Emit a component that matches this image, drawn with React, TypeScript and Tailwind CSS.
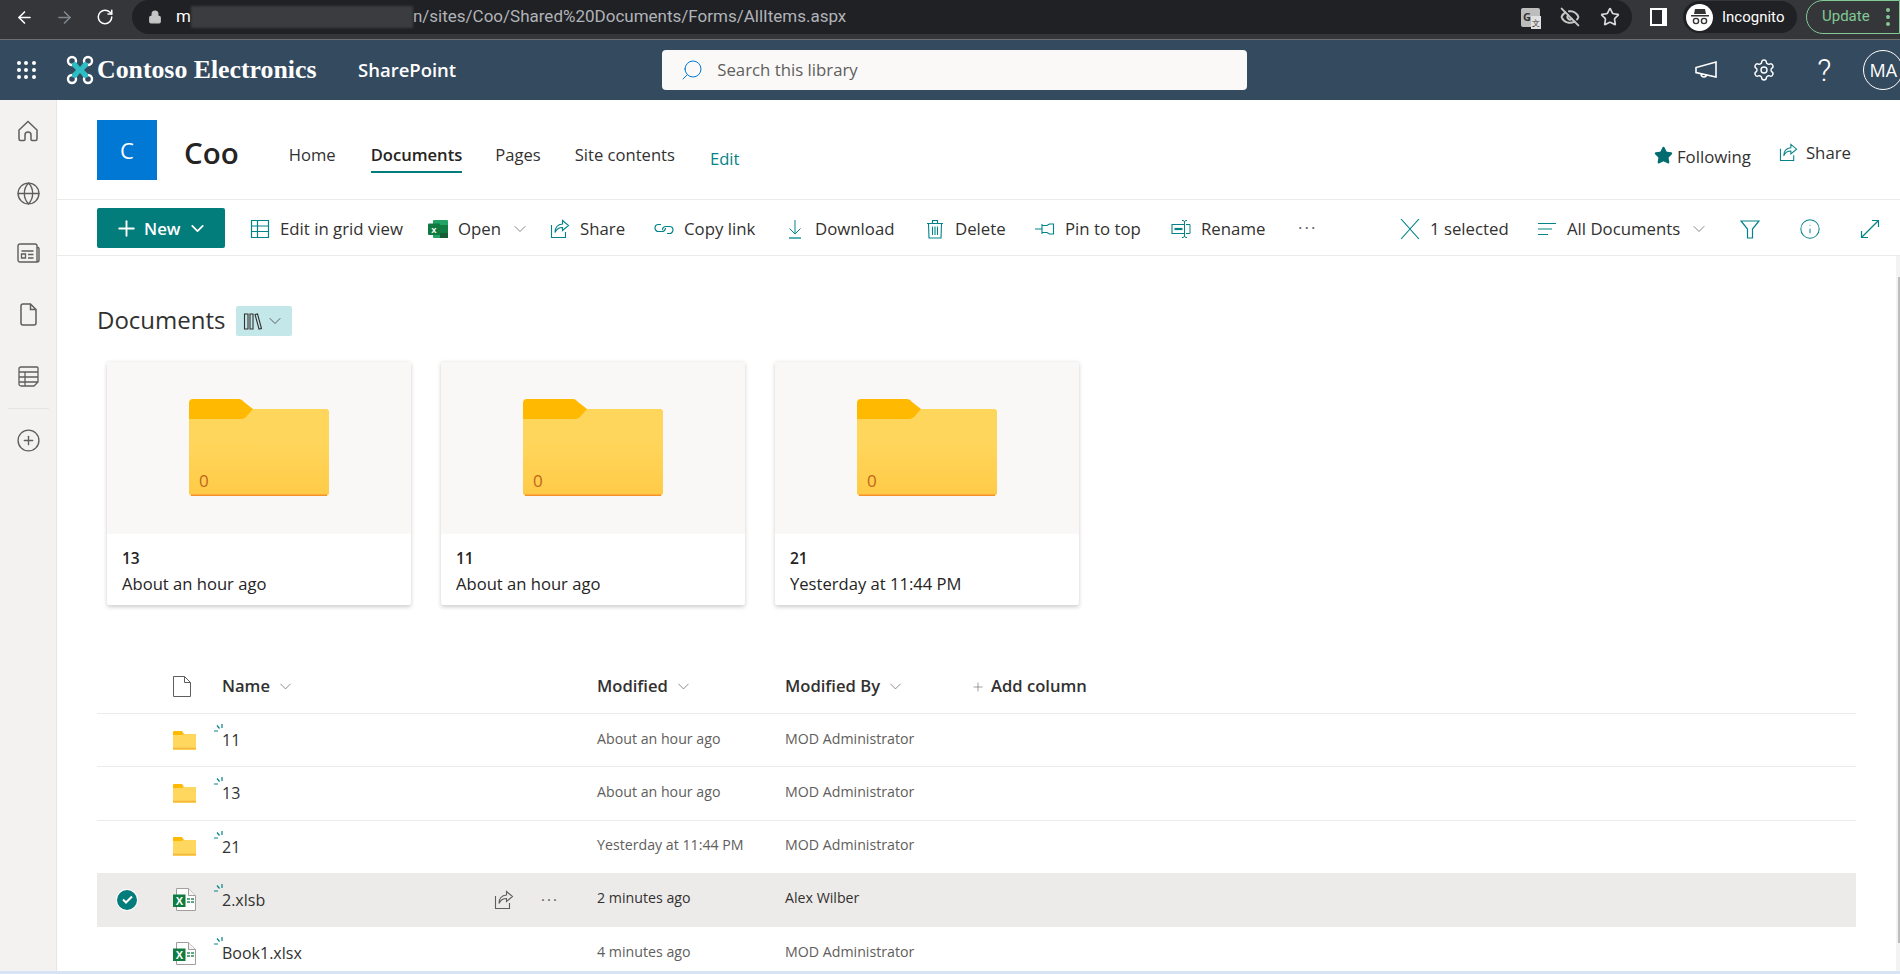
import { ReactNode } from "react";
import {
  ArrowLeft,
  ArrowRight,
  RotateCw,
  Lock,
  EyeOff,
  Star,
  Settings,
  Search,
  Globe,
  PlusCircle,
  Plus,
  ChevronDown,
  Info,
} from "lucide-react";

const font = "font-['Open_Sans','Noto_Sans',sans-serif]";
const teal = "#038387";

function Waffle() {
  return (
    <div className="grid grid-cols-3 gap-[3px] w-[19px]">
      {Array.from({ length: 9 }).map((_, i) => (
        <span key={i} className="w-[4px] h-[4px] rounded-full bg-white" />
      ))}
    </div>
  );
}

function ContosoLogo() {
  return (
    <svg width="28" height="30" viewBox="0 0 28 30" fill="none">
      <circle cx="6" cy="6" r="4" stroke="white" strokeWidth="2.4" />
      <circle cx="22" cy="6" r="4" stroke="white" strokeWidth="2.4" />
      <circle cx="6" cy="24" r="4" stroke="white" strokeWidth="2.4" />
      <circle cx="22" cy="24" r="4" stroke="white" strokeWidth="2.4" />
      <path d="M6 8l4-1 4 5 4-5 4 1 0 3-4 4 4 4 0 3-4 1-4-5-4 5-4-1 0-3 4-4-4-4z" fill="#2ebdc3" />
    </svg>
  );
}

function Icon({ children, w = 20, h = 20, color = teal }: { children: ReactNode; w?: number; h?: number; color?: string }) {
  return (
    <svg width={w} height={h} viewBox={`0 0 ${w} ${h}`} fill="none" stroke={color} strokeWidth="1">
      {children}
    </svg>
  );
}

const GridIcon = () => (
  <Icon>
    <path d="M1.500 1.500h17v17h-17zM1.500 7h17M1.500 12.500h17M7.500 1.500v17" strokeWidth="1.200" />
  </Icon>
);

function ShareIcon({ color = teal, size = 20 }: { color?: string; size?: number }) {
  return (
    <svg width={size} height={size} viewBox="0 0 20 20" fill="none" stroke={color} strokeWidth="1.100">
      <path d="M1.500 6v12.500h14V13" />
      <path d="M12.500 1.500l6 5-6 5V8.500c-4 0-6 1.500-7.500 5 0-5 2.500-8 7.500-8.500z" />
    </svg>
  );
}

const LinkIcon = () => (
  <Icon>
    <path d="M7 5.500H4.500a3.500 3.500 0 0 0 0 7H8a3.500 3.500 0 0 0 3.500-3.500" strokeWidth="1.200" />
    <path d="M13 14.500h2.500a3.500 3.500 0 0 0 0-7H12A3.500 3.500 0 0 0 8.500 11" strokeWidth="1.200" />
  </Icon>
);

const DownloadIcon = () => (
  <Icon>
    <path d="M10 1v14M4.500 9.500L10 15l5.500-5.500" />
    <path d="M4 19h12" strokeWidth="1.300" />
  </Icon>
);

const TrashIcon = () => (
  <Icon>
    <path d="M3.500 4.500l.5 14.500h12l.5-14.500M2 4.500h16M7.500 4.500V1.500h5v3M7.500 7.500V16M10 7.500V16M12.500 7.500V16" strokeWidth="1.100" />
  </Icon>
);

const PinIcon = () => (
  <Icon>
    <path d="M0 10h7M7 5v10M7 6.500h5l2.500-1.500h4v10h-4L12 13.500H7" strokeWidth="1.100" />
  </Icon>
);

const RenameIcon = () => (
  <Icon>
    <path d="M13 5.500H1v9h12" strokeWidth="1.100" />
    <path d="M3.500 10h8" strokeWidth="2.200" />
    <path d="M13.500 3v14M11 1.500h1.500l1 1.500 1-1.500H16M11 18.500h1.500l1-1.500 1 1.500H16M15 5.500h4v9h-4" strokeWidth="1" />
  </Icon>
);

const ListIcon = () => (
  <Icon>
    <path d="M1 4.500h18M1 10h14M1 15.500h10" strokeWidth="1.200" />
  </Icon>
);

const CrossIcon = () => (
  <Icon>
    <path d="M1 0l18 20M19 0L1 20" strokeWidth="1.100" />
  </Icon>
);

const FilterIcon = () => (
  <Icon>
    <path d="M1 2h18l-6.500 8v9h-5v-9z" strokeWidth="1.200" />
  </Icon>
);

const ExpandIcon = () => (
  <Icon>
    <path d="M1.500 18.500l17-17M12 1.500h6.500V8M1.500 12v6.500H8" strokeWidth="1.200" />
  </Icon>
);

function ExcelSmall() {
  return (
    <svg width="20" height="20" viewBox="0 0 20 20">
      <rect x="5" y="1" width="15" height="18" rx="1" fill="#21a366" />
      <rect x="12" y="6" width="8" height="8" fill="#107c41" />
      <rect x="12" y="14" width="8" height="5" fill="#185c37" />
      <rect x="0" y="4.500" width="12" height="11.500" rx="1" fill="#0f7a40" />
      <text x="3.200" y="13.500" fontSize="9.500" fontWeight="700" fill="white" fontFamily="Liberation Sans">x</text>
    </svg>
  );
}

function ExcelFile() {
  return (
    <svg width="23" height="23" viewBox="0 0 23 23" fill="none">
      <path d="M3.500.5h12l7 7v15h-19z" fill="#fff" stroke="#a19f9d" />
      <path d="M15.500.5v7h7" fill="#f3f2f1" stroke="#a19f9d" />
      <g fill="#5fa882">
        <rect x="14" y="10" width="3" height="2" />
        <rect x="18" y="10" width="3" height="2" />
        <rect x="14" y="13" width="3" height="2" />
        <rect x="18" y="13" width="3" height="2" />
      </g>
      <rect x="0" y="6.500" width="12.500" height="12.500" fill="#107c41" />
      <text x="2.800" y="16.500" fontSize="11" fontWeight="700" fill="white" fontFamily="Liberation Sans">X</text>
    </svg>
  );
}

function BigFolder() {
  return (
    <div className="relative w-[140px] h-[97px]">
      <svg width="140" height="97" viewBox="0 0 140 97">
        <defs>
          <linearGradient id="folderBody" x1="0" y1="0" x2="0" y2="1">
            <stop offset="0.35" stopColor="#ffd65c" />
            <stop offset="1" stopColor="#ffcb47" />
          </linearGradient>
        </defs>
        <path d="M4 0h46q3 0 5 3l9 7h72q4 0 4 4v78q0 4-4 4H4q-4 0-4-4V4q0-4 4-4z" fill="#ffb900" />
        <path d="M0 20h52q3 0 5-2l7-8h72q4 0 4 4v79q0 4-4 4H4q-4 0-4-4z" fill="url(#folderBody)" />
        <path d="M2 96.300h136" stroke="#f7902a" strokeWidth="1.400" />
      </svg>
      <span className="absolute left-[10px] bottom-[7px] text-[17px] leading-none text-[#c2651c]">0</span>
    </div>
  );
}

function SmallFolder() {
  return (
    <svg width="23" height="19" viewBox="0 0 23 19">
      <path d="M1 0h8l2 3h12v15a1 1 0 0 1-1 1H1a1 1 0 0 1-1-1V1a1 1 0 0 1 1-1z" fill="#ffb900" />
      <path d="M0 4h8l3-1h12v15a1 1 0 0 1-1 1H1a1 1 0 0 1-1-1z" fill="#ffd75e" />
      <path d="M0 17.500h23" stroke="#f5b53f" strokeWidth="1.500" />
    </svg>
  );
}

function Card({ name, when }: { name: string; when: string }) {
  return (
    <div className="w-[304px] h-[243px] bg-white rounded-[2px] shadow-[0_1.6px_4px_rgba(0,0,0,0.2)] overflow-hidden">
      <div className="h-[172px] bg-[#f9f8f7] flex items-center justify-center pb-[2px]">
        <BigFolder />
      </div>
      <div className="pl-[15px] pt-[13px] text-[#252423]">
        <div className="text-[15.500px] leading-[22px] font-semibold">{name}</div>
        <div className="text-[16.600px] leading-[26px] mt-[2px]">{when}</div>
      </div>
    </div>
  );
}

function Sparkle() {
  return (
    <svg width="9" height="9" viewBox="0 0 9 9" className="absolute left-[-8px] top-[-4px]" stroke="#038387" strokeWidth="1.200" fill="none">
      <path d="M8 0v4M3 1.500l2.500 3M0 7h4" />
    </svg>
  );
}

function CmdItem({ icon, label, chevron, className }: { icon: ReactNode; label: string; chevron?: boolean; className: string }) {
  return (
    <div className={`flex items-center whitespace-nowrap mt-[2px] ${className}`}>
      <span className="w-[20px] flex justify-center shrink-0">{icon}</span>
      <span className="ml-[10px] text-[16.800px] text-[#323130]">{label}</span>
      {chevron && <ChevronDown className="ml-[9px] text-[#605e5c]" size={20} strokeWidth={0.9} />}
    </div>
  );
}

type Row = { name: string; when: string; by: string; kind: "folder" | "excel"; selected?: boolean };

const rows: Row[] = [
  { name: "11", when: "About an hour ago", by: "MOD Administrator", kind: "folder" },
  { name: "13", when: "About an hour ago", by: "MOD Administrator", kind: "folder" },
  { name: "21", when: "Yesterday at 11:44 PM", by: "MOD Administrator", kind: "folder" },
  { name: "2.xlsb", when: "2 minutes ago", by: "Alex Wilber", kind: "excel", selected: true },
  { name: "Book1.xlsx", when: "4 minutes ago", by: "MOD Administrator", kind: "excel" },
];

function FileRow({ row }: { row: Row }) {
  const dateColor = row.selected ? "text-[#323130]" : "text-[#605e5c]";
  return (
    <div className={`flex items-center h-[53.300px] shrink-0 ${row.selected ? "bg-[#edebe9]" : "border-t border-[#edebe9]"}`}>
      <div className="w-[76px] pl-[20px] flex items-center">
        {row.selected && (
          <span className="w-[20px] h-[20px] rounded-full bg-[#037c7c] ring-1 ring-white flex items-center justify-center">
            <svg width="11" height="9" viewBox="0 0 11 9" fill="none" stroke="white" strokeWidth="2"><path d="M1 4.500l3 3 6-6" /></svg>
          </span>
        )}
      </div>
      <div className="w-[49px] flex">{row.kind === "folder" ? <SmallFolder /> : <ExcelFile />}</div>
      <div className="w-[375px] flex items-center">
        <span className={`relative text-[16px] text-[#323130] ${row.selected ? "font-medium" : ""}`}>
          <Sparkle />
          {row.name}
        </span>
        {row.selected && (
          <div className="ml-auto flex items-center gap-[27px] pr-[36px]">
            <ShareIcon color="#605e5c" />
            <span className="text-[#605e5c] tracking-[2px] leading-none text-[15px] w-[20px]">···</span>
          </div>
        )}
      </div>
      <div className={`w-[188px] text-[14.200px] -mt-[4px] ${dateColor}`}>{row.when}</div>
      <div className={`text-[14.200px] -mt-[4px] ${dateColor}`}>{row.by}</div>
    </div>
  );
}

function HeadChevron() {
  return <ChevronDown size={19} strokeWidth={0.9} className="ml-[6px] text-[#605e5c]" />;
}

export default function App() {
  return (
    <div className={`${font} w-[1900px] h-[974px] overflow-hidden flex flex-col bg-white`}>
      {/* chrome */}
      <div className="h-[40px] bg-[#35363a] border-b border-[#6e6e6e] flex items-start shrink-0">
        <div className="flex items-center h-[34px] pl-[15px] text-white">
          <ArrowLeft size={19} />
          <ArrowRight size={19} className="ml-[21px] text-[#80868b]" />
          <RotateCw size={18} className="ml-[22px]" />
        </div>
        <div className="ml-[18px] w-[1500px] h-[34px] bg-[#202124] rounded-[17px] flex items-center pl-[16px]">
          <Lock size={14} className="text-[#c4c7c5]" fill="#c4c7c5" />
          <span className="ml-[14px] text-[17px] text-white font-['Roboto',sans-serif]">m</span>
          <span className="w-[222px] h-[22px] bg-[#3b3c3f] blur-[1px]" />
          <span className="text-[17px] text-[#b0b3b8] font-['Roboto',sans-serif]">n/sites/Coo/Shared%20Documents/Forms/AllItems.aspx</span>
          <div className="ml-auto flex items-center gap-[20px] pr-[12px] text-[#d7d9dc]">
            <span className="relative w-[19px] h-[19px] bg-[#bdbdbd] rounded-[2px] text-[11px] font-bold text-[#333] flex items-center pl-[2px]">
              G
              <span className="absolute right-[-1px] bottom-[-2px] w-[10px] h-[13px] bg-[#e0e0e0] text-[8px] leading-[13px] text-center font-normal">文</span>
            </span>
            <EyeOff size={20} strokeWidth={2.400} className="text-[#c4c7c5]" />
            <Star size={20} />
          </div>
        </div>
        <div className="flex items-center h-[34px] ml-[18px] text-white">
          <span className="w-[17px] h-[18px] border-2 border-white border-r-[5px] bg-[#292a2d]" />
          <div className="ml-[16px] w-[114px] h-[32px] rounded-full bg-[#202124] flex items-center pl-[3px]">
            <span className="w-[27px] h-[27px] rounded-full bg-white flex items-center justify-center">
              <svg width="20" height="18" viewBox="0 0 20 18" fill="#333"><path d="M5 1h10l1 5H4zM1 7h18v1.500H1z" /><circle cx="6" cy="13" r="2.600" fill="none" stroke="#333" strokeWidth="1.400" /><circle cx="14" cy="13" r="2.600" fill="none" stroke="#333" strokeWidth="1.400" /></svg>
            </span>
            <span className="ml-[9px] text-[15px] font-['Roboto',sans-serif]">Incognito</span>
          </div>
          <div className="ml-[9px] w-[94px] h-[34px] -mt-[1px] rounded-l-full border border-[#81c995] flex items-center pl-[15px] text-[#81c995] text-[15px] font-['Roboto',sans-serif]">
            Update
            <span className="ml-[16px] flex flex-col gap-[3px]">
              <span className="w-[4px] h-[4px] rounded-full bg-[#81c995]" />
              <span className="w-[4px] h-[4px] rounded-full bg-[#81c995]" />
              <span className="w-[4px] h-[4px] rounded-full bg-[#81c995]" />
            </span>
          </div>
        </div>
      </div>

      {/* suite bar */}
      <div className="h-[60px] bg-[#344a5e] flex items-center text-white shrink-0">
        <div className="ml-[17px] shrink-0"><Waffle /></div>
        <div className="ml-[30px] shrink-0"><ContosoLogo /></div>
        <span className="ml-[3px] shrink-0 text-[25.800px] font-['Liberation_Serif',serif] font-bold w-[261px] whitespace-nowrap">Contoso Electronics</span>
        <span className="shrink-0 text-[18.500px] font-semibold">SharePoint</span>
        <div className="ml-[206px] shrink-0 w-[585px] h-[40px] rounded-[4px] bg-[#faf9f8] flex items-center pl-[18px]">
          <Search size={24} strokeWidth={1} className="text-[#0078d4] -scale-x-100" />
          <span className="ml-[13px] text-[16.800px] text-[#605e5c]">Search this library</span>
        </div>
        <svg width="24" height="20" viewBox="0 0 24 20" fill="none" stroke="white" strokeWidth="1.600" className="ml-[447px] shrink-0">
          <path d="M22 2v15L2 12.500V7.500zM7 13.800c0 4 5 4 5.500 1.200" />
        </svg>
        <Settings size={24} strokeWidth={1.400} className="ml-[34px] shrink-0" />
        <span className="ml-[41px] shrink-0 text-[31px] font-light leading-none font-['Roboto',sans-serif]">?</span>
        <span className="ml-[32px] w-[40px] h-[40px] shrink-0 rounded-full border border-white flex items-center justify-center text-[18px]">MA</span>
      </div>

      <div className="flex flex-1 min-h-0">
        {/* left rail */}
        <div className="w-[57px] bg-[#f3f2f1] border-r border-[#e8e6e4] shrink-0 flex flex-col items-center pt-[20px]">
          <Icon w={22} h={22} color="#605e5c">
            <path d="M11 1.500L2 10v9a1.500 1.500 0 0 0 1.500 1.500H7a1 1 0 0 0 1-1V15a3 3 0 0 1 6 0v4.500a1 1 0 0 0 1 1h3.500A1.500 1.500 0 0 0 20 19v-9z" strokeWidth="1.500" />
          </Icon>
          <Globe size={25} strokeWidth={1.300} className="mt-[39px] text-[#605e5c]" />
          <div className="mt-[37px] h-[22px]">
            <Icon w={23} h={20} color="#605e5c">
              <path d="M20 4.500h1a1.500 1.500 0 0 1 1 1.500v11a2 2 0 0 1-2 2H3a2 2 0 0 1-2-2V3a2 2 0 0 1 2-2h15a2 2 0 0 1 2 2v16" strokeWidth="1.400" />
              <path d="M4.500 8h12M4.500 11h4v4h-4zM11 11.500h5.500M11 15h5.500" strokeWidth="1.300" />
            </Icon>
          </div>
          <div className="mt-[38px] h-[24px]">
            <Icon w={17} h={23} color="#605e5c">
              <path d="M3 1h7.500L16 6.500V20a2 2 0 0 1-2 2H3a2 2 0 0 1-2-2V3a2 2 0 0 1 2-2zM10.500 1v5.500H16" strokeWidth="1.500" />
            </Icon>
          </div>
          <div className="mt-[39px] h-[21px]">
            <Icon w={21} h={21} color="#605e5c">
              <path d="M3 1h16a1 1 0 0 1 1 1v14l-4 4H3a2 2 0 0 1-2-2V3a2 2 0 0 1 2-2zM1 6h19M1 11h19M1 16h19M7 6v14" strokeWidth="1.300" />
            </Icon>
          </div>
          <div className="w-[41px] border-t border-[#e6e4e2] mt-[21px]" />
          <PlusCircle size={25} strokeWidth={1.300} className="mt-[19px] text-[#605e5c]" />
        </div>

        <div className="flex-1 flex flex-col min-w-0 relative">
          {/* site header */}
          <div className="h-[100px] border-b border-[#edebe9] flex items-start pt-[20px] pl-[40px] shrink-0">
            <div className="w-[60px] h-[60px] bg-[#0078d4] text-white text-[22px] flex items-center justify-center">C</div>
            <span className="ml-[27px] text-[29.500px] font-semibold text-[#252423] leading-[66px]">Coo</span>
            <div className="ml-[50px] flex text-[16.600px] text-[#323130] mt-[23px]">
              <span>Home</span>
              <span className="ml-[35px] h-[30px] border-b-2 border-[#037c7c] font-semibold text-[#252423]">Documents</span>
              <span className="ml-[33px]">Pages</span>
              <span className="ml-[34px]">Site contents</span>
              <span className="ml-[35px] mt-[4px] text-[#038387]">Edit</span>
            </div>
            <div className="ml-auto mt-[22px] flex text-[16.800px] text-[#323130] pr-[49px]">
              <Star size={19} fill="#036c70" className="text-[#036c70] mt-[4px]" />
              <span className="ml-[4px] mt-[2px]">Following</span>
              <span className="ml-[28px] mt-[1px]"><ShareIcon size={19} /></span>
              <span className="ml-[8px] -mt-[2px]">Share</span>
            </div>
          </div>

          {/* command bar */}
          <div className="h-[56px] pt-[1px] border-b border-[#edebe9] flex items-center pl-[40px] shrink-0">
            <div className="w-[128px] h-[40px] rounded-[2px] bg-[#037c7c] text-white flex items-center pl-[17px]">
              <Plus size={25} strokeWidth={1.800} />
              <span className="ml-[5px] mt-[2px] text-[16.800px] font-semibold">New</span>
              <ChevronDown size={21} className="ml-[6px]" />
            </div>
            <CmdItem className="ml-[25px] w-[178px]" icon={<GridIcon />} label="Edit in grid view" />
            <CmdItem className="w-[122px]" icon={<ExcelSmall />} label="Open" chevron />
            <CmdItem className="w-[104px]" icon={<ShareIcon />} label="Share" />
            <CmdItem className="w-[131px]" icon={<LinkIcon />} label="Copy link" />
            <CmdItem className="w-[140px]" icon={<DownloadIcon />} label="Download" />
            <CmdItem className="w-[110px]" icon={<TrashIcon />} label="Delete" />
            <CmdItem className="w-[136px]" icon={<PinIcon />} label="Pin to top" />
            <CmdItem className="w-[127px]" icon={<RenameIcon />} label="Rename" />
            <span className="text-[#605e5c] text-[17px] tracking-[2px] w-[102px]">···</span>
            <CmdItem className="w-[137px]" icon={<CrossIcon />} label="1 selected" />
            <CmdItem className="w-[203px]" icon={<ListIcon />} label="All Documents" chevron />
            <span className="mt-[2px]"><FilterIcon /></span>
            <Info size={22} strokeWidth={1.100} className="ml-[39px] mt-[2px] text-[#038387]" />
            <span className="ml-[39px] mt-[2px]"><ExpandIcon /></span>
          </div>

          {/* content */}
          <div className="flex-1 min-h-0 pl-[40px] pr-[44px] overflow-hidden">
            <div className="flex items-center pt-[50px] h-[80px]">
              <span className="text-[24px] text-[#323130] font-normal leading-[30px] -mt-[2px]">Documents</span>
              <div className="ml-[11px] w-[56px] h-[30px] bg-[#c4e8ea] rounded-[2px] flex items-center justify-center gap-[3px] text-[#323130]">
                <Icon w={19} h={17} color="#323130">
                  <path d="M1.500 1h3.500v15H1.500zM7 1h3v15H7zM12 1.500l2.500-.5 4 14.500-2.500.5z" strokeWidth="1.100" />
                </Icon>
                <ChevronDown size={20} strokeWidth={0.9} />
              </div>
            </div>
            <div className="flex gap-[30px] pl-[10px] mt-[26px]">
              <Card name="13" when="About an hour ago" />
              <Card name="11" when="About an hour ago" />
              <Card name="21" when="Yesterday at 11:44 PM" />
            </div>
            <div className="mt-[55px] flex flex-col">
              <div className="h-[53px] flex items-center text-[16.600px] font-semibold text-[#323130]">
                <div className="w-[76px]" />
                <div className="w-[49px]">
                  <Icon w={18} h={21} color="#605e5c">
                    <path d="M.5.5h11l6 6v14H.5zM11.500.5v6h6" />
                  </Icon>
                </div>
                <div className="w-[375px] flex items-center">Name<HeadChevron /></div>
                <div className="w-[188px] flex items-center">Modified<HeadChevron /></div>
                <div className="w-[186px] flex items-center whitespace-nowrap">Modified By<HeadChevron /></div>
                <Plus size={14} strokeWidth={1} className="text-[#605e5c]" />
                <span className="ml-[6px]">Add column</span>
              </div>
              {rows.map((row) => (
                <FileRow key={row.name} row={row} />
              ))}
            </div>
          </div>

          {/* scrollbar */}
          <div className="absolute right-0 top-[156px] bottom-0 w-[4px] bg-[#f3f3f3]">
            <div className="ml-[2px] mt-[21px] w-[2px] h-[666px] bg-[#bdbdbd]" />
          </div>
        </div>
      </div>
      {/* desktop peeking out at the bottom */}
      <div className="h-[3px] bg-[#d6e4f5] shrink-0" />
    </div>
  );
}
